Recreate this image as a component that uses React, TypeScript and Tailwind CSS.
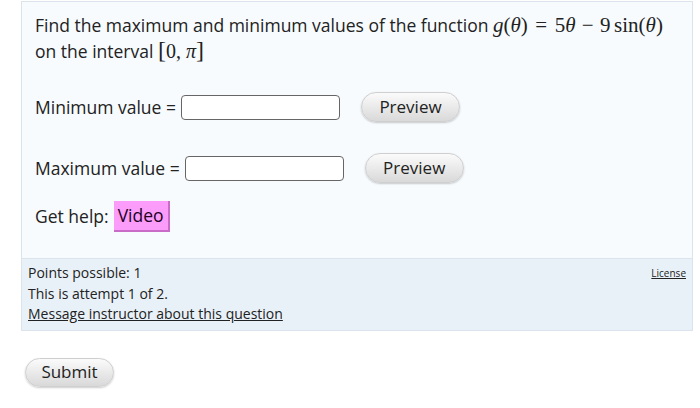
import React from "react";

const sans = { fontFamily: '"Open Sans", "Noto Sans", sans-serif' };

const M = ({ children, i, className = "" }: { children: React.ReactNode; i?: boolean; className?: string }) => (
  <span className={(i ? "italic " : "") + className} style={{ fontFamily: '"Liberation Serif", "DejaVu Serif", serif' }}>
    {children}
  </span>
);

const Btn = ({ label, cls }: { label: string; cls: string }) => (
  <button className={"rounded-full border border-[#cfcfcf] bg-gradient-to-b from-[#fbfbfb] to-[#d9d9d9] text-[17px] text-[#222] shadow-[0_1px_2px_rgba(0,0,0,0.2)] " + cls}>
    {label}
  </button>
);

const AnswerRow = ({ label }: { label: string }) => (
  <div className="flex items-center">
    <span className="text-[17.5px] text-[#222]">{label} =</span>
    <input className="ml-[5px] h-[25px] w-[159px] rounded-[4px] border border-[#666] bg-white" />
    <div className="ml-[21px]">
      <Btn label="Preview" cls="h-[30px] w-[99px]" />
    </div>
  </div>
);

export default function App() {
  return (
    <div className="min-h-[408px] w-[700px] bg-white pt-px" style={sans}>
      <div className="ml-[21px] w-[672px] border border-[#dbe4ec]">
        <div className="bg-[#f7fbfe] px-[13px] pb-[26px] pt-[10px]">
          <p className="text-[17.5px] leading-[25px] text-[#222]">
            Find the maximum and minimum values of the function{" "}
            <span className="text-[21px]">
              <M i>g</M>
              <M>(</M>
              <M i>θ</M>
              <M>)</M>
              <M className="mx-[0.36em]">=</M>
              <M>5</M>
              <M i>θ</M>
              <M className="mx-[0.3em]">−</M>
              <M className="mr-[0.17em]">9</M>
              <M>sin(</M>
              <M i>θ</M>
              <M>)</M>
            </span>
            <br />
            on the interval{" "}
            <span className="text-[20px]">
              <M>
                <span className="text-[24px] leading-none">[</span>0,{" "}
              </M>
              <M i>π</M>
              <M>
                <span className="text-[24px] leading-none">]</span>
              </M>
            </span>
          </p>
          <div className="mt-[28px]">
            <AnswerRow label="Minimum value" />
          </div>
          <div className="mt-[31px]">
            <AnswerRow label="Maximum value" />
          </div>
          <div className="mt-[18px] flex items-center">
            <span className="text-[17.5px] text-[#222]">Get help:</span>
            <span className="ml-[5px] flex h-[31px] items-center border-b-2 border-r-2 border-[#c86cc8] bg-[#fb9cfb] px-[4px] text-[17.5px] text-[#202]">
              Video
            </span>
          </div>
        </div>
        <div className="flex justify-between border-t border-[#dbe4ec] bg-[#e9f1f8] px-[6px] pb-[5px] pt-[4px] text-[14px] leading-[20.5px] text-[#222]">
          <div>
            <div>Points possible: 1</div>
            <div>This is attempt 1 of 2.</div>
            <div className="underline">Message instructor about this question</div>
          </div>
          <div className="text-[10px] leading-[20px] underline">License</div>
        </div>
      </div>
      <div className="ml-[25px] mt-[27px]">
        <Btn label="Submit" cls="h-[29px] w-[89px]" />
      </div>
    </div>
  );
}
